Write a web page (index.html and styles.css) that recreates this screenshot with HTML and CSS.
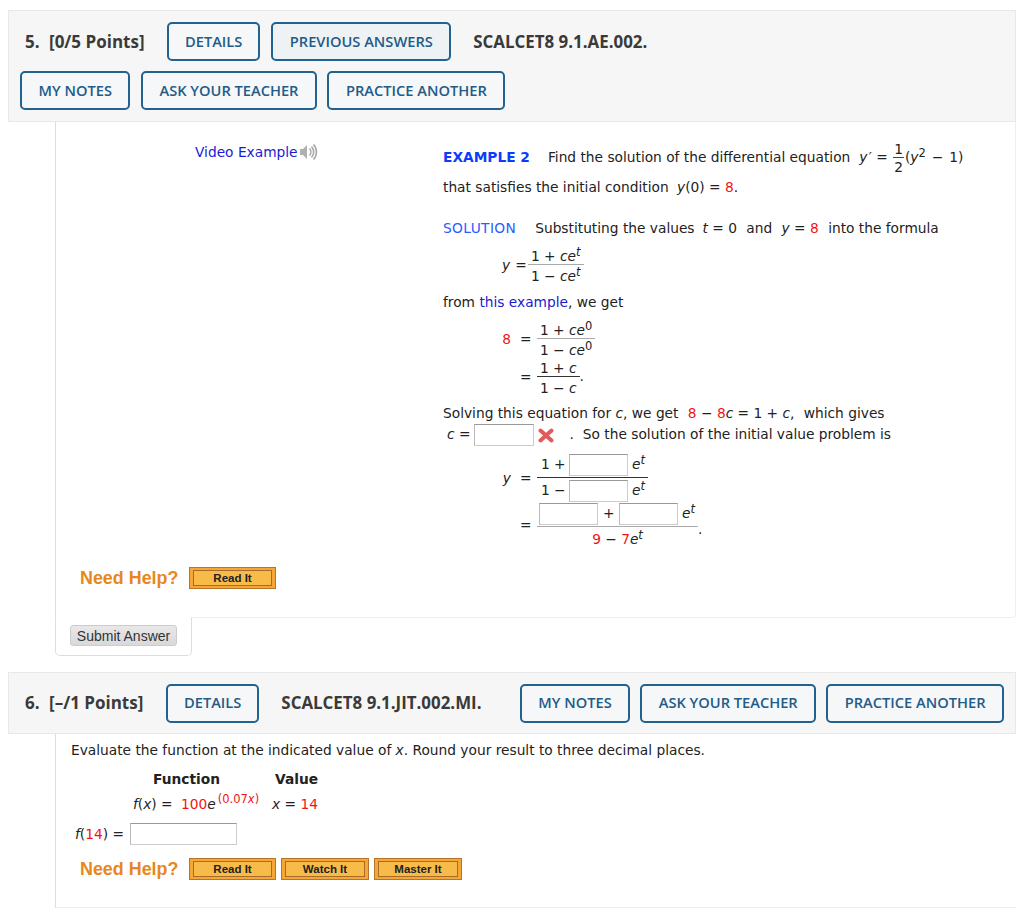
FILE: index.html
```html
<!DOCTYPE html>
<html lang="en">
<head>
<meta charset="utf-8">
<title>SCALCET8 questions</title>
<link rel="stylesheet" href="styles.css">
</head>
<body>
<section class="question q5">
  <header class="panel panel-two-rows">
    <div class="row row-first">
      <span class="num">5.</span><span class="points">[0/5 Points]</span>
      <a class="btn btn-details">DETAILS</a>
      <a class="btn btn-active">PREVIOUS ANSWERS</a>
      <span class="code">SCALCET8 9.1.AE.002.</span>
    </div>
    <div class="row row-second">
      <a class="btn">MY NOTES</a>
      <a class="btn">ASK YOUR TEACHER</a>
      <a class="btn">PRACTICE ANOTHER</a>
    </div>
  </header>
  <div class="qbody qbody-five">
    <div class="content-five">
      <div class="video-col">
        <a class="video-link">Video Example</a>
        <svg class="speaker" width="20" height="18" viewBox="0 0 20 18"><path d="M1 6h3l4-4v14l-4-4H1z" fill="#b0b0b0"/><path d="M10.500 5.500a5 5 0 0 1 0 7M12.500 3.500a8 8 0 0 1 0 11M14.500 1.500a11 11 0 0 1 0 15" fill="none" stroke="#a8a8a8" stroke-width="1.600"/></svg>
      </div>
      <div class="main-col">
        <p class="line line-ex"><b class="ex">EXAMPLE 2</b><span class="sp-ex">Find the solution of the differential equation</span><i class="m-gap">y</i>&#8202;′ = <span class="frac frac-small"><span class="top">1</span><span class="bot">2</span></span>(<i>y</i><sup>2</sup><span class="op">−</span>1)</p>
        <p class="line line-cond">that satisfies the initial condition <i class="m-tight">y</i>(0) = <span class="red">8</span>.</p>
        <p class="line line-sol"><span class="sol">SOLUTION</span><span class="sp-sol">Substituting the values</span><i class="m-gap">t</i> = 0 <span class="m-wide">and</span> <i class="m-gap">y</i> = <span class="red">8</span> <span class="m-gap">into the formula</span></p>
        <div class="eq eq-y">
          <span class="lhs"><i>y</i><span class="eq-y-sign">=</span></span>
          <span class="frac"><span class="top">1 + <i>c</i><i>e</i><sup><i>t</i></sup></span><span class="bot">1 − <i>c</i><i>e</i><sup><i>t</i></sup></span></span>
        </div>
        <p class="line line-from">from <a class="link">this example</a>, we get</p>
        <div class="eq eq-8">
          <span class="lhs"><span class="red">8</span><span class="eqs">=</span></span>
          <span class="frac"><span class="top">1 + <i>c</i><i>e</i><sup>0</sup></span><span class="bot">1 − <i>c</i><i>e</i><sup>0</sup></span></span>
        </div>
        <div class="eq eq-c">
          <span class="lhs"><span class="eqs">=</span></span>
          <span class="frac frac-dark"><span class="top">1 + <i>c</i></span><span class="bot">1 − <i>c</i></span></span><span class="dot">.</span>
        </div>
        <p class="line line-solve">Solving this equation for <i>c</i>, we get <span class="m-gap red">8</span> − <span class="red">8</span><i>c</i> = 1 + <i>c</i>, <span class="m-gap">which gives</span></p>
        <p class="line line-input"><span class="c-eq"><i>c</i> =</span><span class="box box-c"></span><svg class="cross" width="16" height="15" viewBox="0 0 16 15"><path d="M2.500 2.500l11 10M13.500 2.500l-11 10" stroke="#e25b5b" stroke-width="4" stroke-linecap="round"/></svg><span class="after-x">.</span><span class="so">So the solution of the initial value problem is</span></p>
        <div class="eq eq-big">
          <span class="lhs"><i>y</i><span class="eqs">=</span></span>
          <span class="frac frac-dark frac-wide">
            <span class="top top-box"><span class="pre">1 +</span><span class="box box-f"></span><span class="et"><i>e</i><sup><i>t</i></sup></span></span>
            <span class="bot bot-box"><span class="pre">1 −</span><span class="box box-f"></span><span class="et"><i>e</i><sup><i>t</i></sup></span></span>
          </span>
        </div>
        <div class="eq eq-last">
          <span class="lhs"><span class="eqs">=</span></span>
          <span class="frac frac-last">
            <span class="top top-last"><span class="box box-f"></span><span class="plus">+</span><span class="box box-f"></span><span class="et et-last"><i>e</i><sup><i>t</i></sup></span></span>
            <span class="bot"><span class="red">9</span> − <span class="red">7</span><i>e</i><sup><i>t</i></sup></span>
          </span><span class="dot">.</span>
        </div>
      </div>
    </div>
    <div class="help help-five">
      <span class="need">Need Help?</span>
      <a class="help-btn"><span>Read It</span></a>
    </div>
  </div>
  <div class="submit-tab"><button class="submit" type="button">Submit Answer</button></div>
</section>

<section class="question q6">
  <header class="panel panel-one-row">
    <span class="num">6.</span><span class="points">[–/1 Points]</span>
    <a class="btn btn-details">DETAILS</a>
    <span class="code code-six">SCALCET8 9.1.JIT.002.MI.</span>
    <div class="right-btns">
      <a class="btn">MY NOTES</a>
      <a class="btn">ASK YOUR TEACHER</a>
      <a class="btn">PRACTICE ANOTHER</a>
    </div>
  </header>
  <div class="qbody qbody-six">
    <p class="prompt">Evaluate the function at the indicated value of <i>x</i>. Round your result to three decimal places.</p>
    <div class="fn-table">
      <b class="fn-h1">Function</b><b class="fn-h2">Value</b>
      <span class="fn-c1"><i>f</i>(<i>x</i>) = <span class="red m-tight">100</span><i>e</i><sup class="red fn-sup">(0.07<i>x</i>)</sup></span><span class="fn-c2"><i>x</i> = <span class="red">14</span></span>
    </div>
    <p class="answer"><i>f</i>(<span class="red">14</span>) =<span class="box box-answer"></span></p>
    <div class="help help-six">
      <span class="need">Need Help?</span>
      <a class="help-btn"><span>Read It</span></a>
      <a class="help-btn"><span>Watch It</span></a>
      <a class="help-btn"><span>Master It</span></a>
    </div>
  </div>
</section>
</body>
</html>
```
FILE: styles.css
```css
* { box-sizing: border-box; }
html, body { margin: 0; padding: 0; background: #fff; }
body { padding: 10px 8px 0; width: 1024px; height: 924px; overflow: hidden; font: 13.75px/18px "DejaVu Sans", Verdana, sans-serif; color: #222; }
p { margin: 0; }
i { font-style: italic; }
sup { font-size: 11.500px; line-height: 0; vertical-align: 5px; }
.red { color: #f01414; }
.link { color: #1a1ad0; }
.op { margin: 0 6px; }
.panel { background: #f6f6f6; border: 1px solid #e8e8e8; font-family: "Open Sans", sans-serif; color: #3a3a3a; }
.panel-two-rows { height: 112px; padding: 11px 0 0 11px; }
.panel-one-row { height: 62px; padding-left: 16px; display: flex; align-items: center; }
.panel-one-row .points { width: 117px; }
.row { display: flex; align-items: center; }
.row-first { height: 39px; padding-left: 5px; }
.row-second { height: 39px; margin-top: 10px; gap: 10.500px; }
.num { font-weight: 700; font-size: 17px; width: 24px; }
.points { font-weight: 700; font-size: 17px; width: 118px; white-space: nowrap; }
.btn { display: inline-flex; align-items: center; justify-content: center; height: 39px; padding: 0 16.500px 2px; border: 2px solid #22628f; border-radius: 5px; background: #f6f7f8; color: #235b88; font-size: 14.650px; font-weight: 600; white-space: nowrap; }
.btn-details { padding: 0 16px 2px; }
.btn-active { margin-left: 11px; background: #eff2f5; }
.code { font-weight: 700; font-size: 16.900px; margin-left: 22px; white-space: nowrap; }
.right-btns { display: flex; gap: 10px; margin-left: auto; margin-right: 11px; }
.qbody { margin-left: 47px; border: 1px solid #eee; border-top: 0; border-left: 1px solid #ddd; background: #fff; }
.qbody-five { height: 496px; border-radius: 0 0 4px 0; }
.content-five { display: flex; height: 444px; }
.video-col { width: 387px; padding: 21px 0 0 139px; display: flex; align-items: flex-start; flex: none; }
.video-link { color: #1a1ad6; line-height: 18px; }
.speaker { margin-left: 1px; }
.main-col { flex: 1; }
.line { white-space: nowrap; line-height: 18px; }
.m-tight { margin-left: 4px; }
.m-gap { margin-left: 5px; }
.m-wide { margin-left: 5px; }
.line-ex { margin-top: 26px; height: 20px; }
.ex { color: #0a3cff; font-weight: 700; }
.sp-ex { margin-left: 18px; margin-right: 4px; }
.line-cond { margin-top: 10px; }
.line-sol { margin-top: 23px; }
.sol { color: #2a5cff; letter-spacing: 0.380px; }
.sp-sol { margin-left: 19px; margin-right: 3px; }
.frac { display: inline-flex; flex-direction: column; align-items: stretch; text-align: center; vertical-align: middle; }
.frac .top { display: block; border-bottom: 1px solid #aaa; margin-top: 2px; padding: 0 3px; line-height: 16px; }
.frac .bot { display: block; padding: 3px 3px 0; line-height: 17px; }
.frac-small { margin: -14px 1px; }
.frac-small .top { border-color: #444; padding: 0 1px; margin-top: 0; line-height: 16px; }
.frac-small .bot { padding: 1px 1px 0; line-height: 17px; }
.frac-dark .top { border-color: #333; }
.eq { display: flex; align-items: center; white-space: nowrap; }
.eq-y { margin-top: 8px; height: 40px; padding-left: 59px; }
.eq-y .lhs { width: 26px; }
.eq-y-sign { margin-left: 5px; }
.line-from { margin-top: 8px; }
.lhs { display: inline-flex; align-items: center; flex: none; }
.eq-8, .eq-c, .eq-big, .eq-last { padding-left: 60px; }
.eq-8 .lhs, .eq-c .lhs, .eq-big .lhs, .eq-last .lhs { width: 34px; justify-content: flex-end; }
.eqs { width: 17px; margin-left: 9px; text-align: left; flex: none; }
.eq-8 { margin-top: 8px; height: 40px; }
.eq-c { height: 36px; }
.dot { align-self: flex-end; margin-bottom: 10px; }
.line-solve { margin-top: 9px; }
.line-input { margin-top: 2px; height: 22px; display: flex; align-items: center; }
.c-eq { margin: 0 4px 2px 4px; }
.box { display: inline-block; background: #fff; border: 1px solid #ccc; border-top-color: #999; border-left-color: #bbb; vertical-align: middle; }
.box-c { width: 60px; height: 22px; }
.cross { margin-left: 4px; flex: none; }
.after-x { margin: 0 0 2px 15px; }
.so { margin: 0 0 2px 9px; }
.eq-big { margin-top: 8px; height: 47px; }
.frac-wide { width: 111px; }
.frac-wide .top { margin-top: 0; padding: 0 0 1px 4px; line-height: 22px; text-align: left; white-space: nowrap; }
.frac-wide .bot { padding: 1px 0 0 4px; line-height: 22px; text-align: left; white-space: nowrap; }
.pre { display: inline-block; width: 28px; }
.box-f { width: 59px; height: 22px; }
.et { margin-left: 4px; }
.eq-last { margin-top: 1px; height: 46px; }
.frac-last { width: 161px; align-self: flex-start; }
.frac .top-last { margin-top: 0; padding: 0 0 1px 2px; line-height: 23px; text-align: left; }
.frac-last .bot { padding-top: 4px; }
.plus { margin: 0 5px; display: inline-block; width: 11px; text-align: center; }
.help { display: flex; align-items: center; }
.help-five { height: 22px; margin-top: 1px; padding-left: 24px; }
.need { font: 700 17.900px/22px "Liberation Sans", Arial, sans-serif; color: #e8871e; width: 109px; flex: none; }
.help-btn { display: inline-flex; width: 87px; height: 22px; margin-right: 5px; padding: 2px 3px; background: #f5a637; border: 1px solid #b5752a; }
.help-btn + .help-btn { width: 88px; }
.help-btn span { flex: 1; display: flex; align-items: center; justify-content: center; padding-top: 2px; background: #f8bb49; border: 1px solid #a56d28; color: #222; font: 700 11.500px/1 "Liberation Sans", Arial, sans-serif; }
.submit-tab { margin: -1px 0 0 47px; width: 137px; height: 39px; padding: 7px 0 0 14px; border: 1px solid #ddd; border-top: 1px solid #fff; border-radius: 0 0 5px 5px; position: relative; background: #fff; }
.submit { display: block; width: 107px; height: 21px; padding: 0; border: 1px solid #ccc; border-radius: 3px; background: linear-gradient(#e8e8e8, #d9d9d9); color: #333; font: 14px/1 "Liberation Sans", Arial, sans-serif; }
.q6 { margin-top: 16px; }
.qbody-six { height: 174px; border-right: 0; padding-left: 15px; }
.prompt { padding-top: 7px; white-space: nowrap; }
.fn-table { display: grid; grid-template-columns: 201px 100px; margin-top: 11px; white-space: nowrap; }
.fn-h1 { padding-left: 82px; font-weight: 700; line-height: 18px; }
.fn-h2 { padding-left: 3px; font-weight: 700; line-height: 18px; }
.fn-c1 { padding-left: 62px; margin-top: 7px; }
.fn-c2 { margin-top: 7px; }
.fn-sup { margin-left: 2px; vertical-align: 6px; }
.answer { display: flex; align-items: center; margin-top: 10px; padding-left: 4px; height: 22px; white-space: pre-wrap; }
.box-answer { width: 107px; height: 22px; margin-left: 6px; }
.help-six { margin-top: 13px; padding-left: 9px; }
```
